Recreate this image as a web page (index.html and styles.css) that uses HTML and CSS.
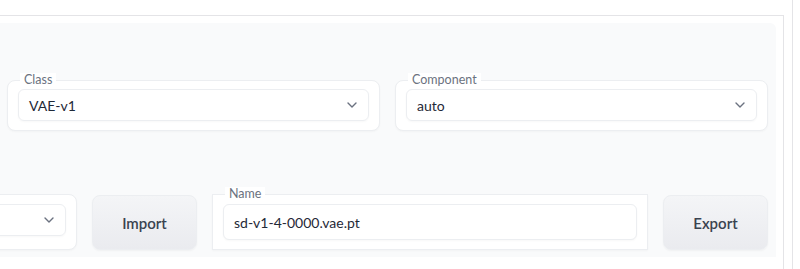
FILE: index.html
```html
<!DOCTYPE html>
<html lang="en">
  <head>
    <meta charset="UTF-8" />
    <meta name="viewport" content="width=device-width, initial-scale=1.0" />
    <title>Model export</title>
    <link rel="stylesheet" href="styles.css">
  </head>
  <body>
    <div class="page">
      <div class="frame">
        <div class="panel">
          <div class="row row--top">
            <div class="block">
              <span class="block__label">Class</span>
              <div class="select">
                <span>VAE-v1</span>
                <svg class="chevron" width="10" height="6" viewBox="0 0 10 6">
                  <path d="M1 1 L5 5 L9 1" />
                </svg>
              </div>
            </div>
            <div class="block">
              <span class="block__label">Component</span>
              <div class="select">
                <span>auto</span>
                <svg class="chevron" width="10" height="6" viewBox="0 0 10 6">
                  <path d="M1 1 L5 5 L9 1" />
                </svg>
              </div>
            </div>
          </div>

          <div class="row row--bottom">
            <div class="block block--source">
              <div class="select">
                <span></span>
                <svg class="chevron" width="10" height="6" viewBox="0 0 10 6">
                  <path d="M1 1 L5 5 L9 1" />
                </svg>
              </div>
            </div>
            <button class="btn">Import</button>
            <div class="block block--name">
              <span class="block__label">Name</span>
              <input class="text-input" type="text" value="sd-v1-4-0000.vae.pt" />
            </div>
            <button class="btn">Export</button>
          </div>
        </div>
      </div>
      <div class="edge"></div>
    </div>
  </body>
</html>
```

FILE: styles.css
```css
body {
  margin: 0;
  font-family: Lato, "Noto Sans", sans-serif;
  background-color: #ffffff;
  overflow: hidden;
}

.page {
  display: flex;
  height: 269px;
}

.frame {
  box-sizing: border-box;
  width: 784px;
  margin-top: 15px;
  padding: 7px 7px 0 0;
  border-top: 1px solid #e4e4e7;
  border-right: 1px solid #e4e4e7;
}

.edge {
  margin-left: 8px;
  border-left: 1px solid #e4e4e7;
}

.panel {
  height: 234px;
  box-sizing: border-box;
  padding: 57px 8px 7px 7px;
  background-color: #f9fafb;
  border-radius: 0 6px 0 0;
}

.row {
  display: flex;
  gap: 15px;
}

.row--top .block {
  flex: 1;
}

.row--bottom {
  margin-top: 63px;
  margin-left: -90px;
  height: 56px;
}

.block {
  position: relative;
  box-sizing: border-box;
  padding: 8px 10px 9px 10px;
  background-color: #ffffff;
  border: 1px solid #eceef1;
  border-radius: 8px;
  box-shadow: 0 1px 2px rgba(0, 0, 0, 0.03);
}

.block__label {
  position: absolute;
  top: -8px;
  left: 12px;
  padding: 0 4px;
  font-size: 12.5px;
  line-height: 14px;
  color: #6b7280;
  background-color: #ffffff;
}

.block--source {
  width: 160px;
  padding-top: 9px;
}

.block--name {
  flex: 1;
  padding-top: 9px;
  border-radius: 0;
}

.select {
  box-sizing: border-box;
  height: 32px;
  display: flex;
  align-items: center;
  justify-content: space-between;
  padding: 0 11px 0 10px;
  font-size: 14px;
  color: #1f2937;
  border: 1px solid #eceef1;
  border-radius: 6px;
  box-shadow: 0 1px 2px rgba(0, 0, 0, 0.03);
}

.chevron path {
  fill: none;
  stroke: #6b7280;
  stroke-width: 1.4;
  stroke-linecap: round;
  stroke-linejoin: round;
}

.text-input {
  box-sizing: border-box;
  width: 100%;
  height: 36px;
  padding: 0 10px;
  font-family: Lato, "Noto Sans", sans-serif;
  font-size: 14px;
  color: #1f2937;
  border: 1px solid #eceef1;
  border-radius: 6px;
  outline: none;
  box-shadow: 0 1px 2px rgba(0, 0, 0, 0.03);
}

.btn {
  width: 105px;
  margin-top: 1px;
  font-family: Lato, "Noto Sans", sans-serif;
  font-size: 15px;
  font-weight: 600;
  color: #3a4350;
  background: linear-gradient(to bottom, #f4f5f7, #eaebef);
  border: 1px solid #eceef1;
  border-radius: 8px;
  box-shadow: 0 1px 2px rgba(0, 0, 0, 0.04);
  cursor: pointer;
}
```
